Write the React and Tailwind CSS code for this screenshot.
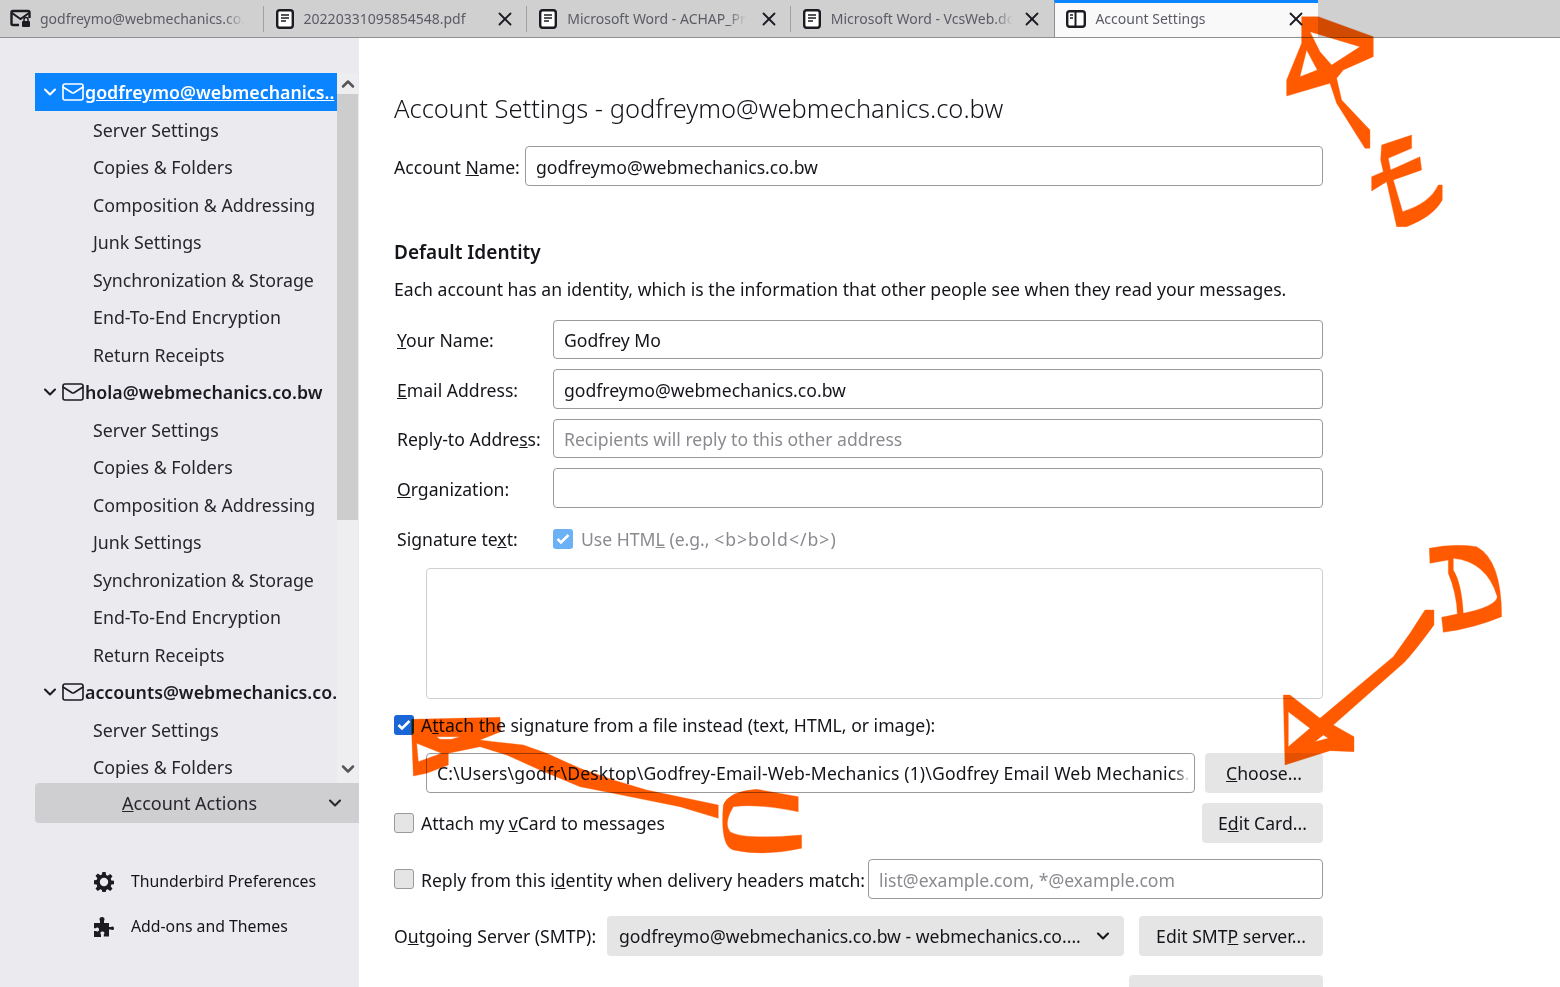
import { X, ChevronDown, ChevronUp, Mail } from "lucide-react";

const font = "font-['Noto_Sans','Open_Sans',sans-serif]";

const MailLock = () => (
  <svg width="22" height="20" viewBox="0 0 22 20" fill="none">
    <path d="M9 16H3a1.5 1.5 0 0 1-1.5-1.5v-11A1.5 1.5 0 0 1 3 2h15a1.5 1.5 0 0 1 1.5 1.5V9" stroke="#1c1b22" strokeWidth="2.4" />
    <path d="M2 4l8.5 6L19 4" stroke="#1c1b22" strokeWidth="2" />
    <rect x="12" y="12" width="8" height="6" rx="1" fill="#1c1b22" />
    <path d="M14 12v-1.5a2 2 0 0 1 4 0V12" stroke="#1c1b22" strokeWidth="1.5" />
  </svg>
);

const DocIcon = () => (
  <svg width="18" height="20" viewBox="0 0 18 20" fill="none">
    <rect x="1.2" y="1.2" width="15.6" height="17.6" rx="2.5" fill="#fff" stroke="#1c1b22" strokeWidth="2.4" />
    <path d="M5 6h8M5 9h8M5 12h5" stroke="#1c1b22" strokeWidth="1.6" />
  </svg>
);

const SplitIcon = () => (
  <svg width="20" height="18" viewBox="0 0 20 18" fill="none">
    <rect x="1.2" y="1.2" width="17.6" height="15.6" rx="2.5" fill="#fff" stroke="#1c1b22" strokeWidth="2.4" />
    <path d="M9.5 1.5v15" stroke="#1c1b22" strokeWidth="2" />
    <path d="M4 5h3M4 8h3" stroke="#1c1b22" strokeWidth="1.5" />
  </svg>
);

const Gear = () => (
  <svg width="20" height="20" viewBox="0 0 20 20">
    <path
      fillRule="evenodd"
      fill="#1c1b22"
      d="M8.4 0h3.2l.5 3 1.6.7 2.5-1.8 2.3 2.3-1.8 2.5.7 1.7 3 .5v3.2l-3 .5-.7 1.6 1.8 2.5-2.3 2.3-2.5-1.8-1.6.7-.5 3H8.4l-.5-3-1.6-.7-2.5 1.8-2.3-2.3 1.8-2.5-.7-1.6-3-.5V8.4l3-.5.7-1.7L1.5 3.700l2.3-2.3 2.5 1.800 1.600-.7zM10 5.800a4.200 4.200 0 1 0 0 8.400 4.200 4.200 0 0 0 0-8.400z"
    />
  </svg>
);

const PuzzleIcon = () => (
  <svg width="20" height="20" viewBox="0 0 20 20">
    <path
      fill="#1c1b22"
      d="M0 6h6V4.500C6 3.500 5.500 3 5.500 2 5.500.8 6.600 0 8 0s2.500.8 2.500 2c0 1-.5 1.500-.5 2.500V6h5v4h1.500c.8 0 1.200-.6 2-.6 1 0 1.500 1 1.500 1.800s-.5 1.800-1.500 1.800c-.8 0-1.200-.6-2-.6H15v7H9.800v-1.500c0-.8.6-1.200.6-2 0-1-1-1.500-2-1.500s-2 .5-2 1.500c0 .8.6 1.200.6 2V20H0v-6h1.500c.8 0 1.200.6 2 .6 1 0 1.500-1 1.500-2s-.5-2-1.500-2c-.8 0-1.200.6-2 .6H0z"
    />
  </svg>
);

const Tab = ({ icon, title, active, closable = true, separator = true, fade = true, iconPad = "pl-[12px]" }) => (
  <div
    className={`relative w-[263.6px] h-full flex items-center shrink-0 ${
      active ? "bg-[#f9f9fa] border-l border-[#8f8f8f] h-[38px] border-t-[3px] border-t-[#0a84ff] pb-[3px]" : ""
    }`}
  >
    <div className={`w-[40px] flex shrink-0 ${iconPad}`}>{icon}</div>
    <div
      className={`text-[14px] text-[#5b5b66] whitespace-nowrap ${
        fade ? "inline-block [mask-image:linear-gradient(to_right,black_90%,transparent)]" : ""
      }`}
    >
      {title}
    </div>
    {closable && <X className="absolute right-[11px] text-[#1c1b22]" size={22} strokeWidth={2} />}
    {separator && <div className="absolute right-0 top-[6px] h-[26px] w-px bg-[#a0a0a0]" />}
  </div>
);

const TabBar = () => (
  <div className="h-[38px] bg-[#d0d0d0] border-b border-[#8f8f8f] flex">
    <Tab icon={<MailLock />} title="godfreymo@webmechanics.co." closable={false} iconPad="pl-[10px]" />
    <Tab icon={<DocIcon />} title="20220331095854548.pdf" fade={false} />
    <Tab icon={<DocIcon />} title="Microsoft Word - ACHAP_Pr" />
    <Tab icon={<DocIcon />} title="Microsoft Word - VcsWeb.dc" separator={false} />
    <Tab icon={<SplitIcon />} title="Account Settings" active separator={false} fade={false} iconPad="pl-[11px]" />
  </div>
);

const children = [
  "Server Settings",
  "Copies & Folders",
  "Composition & Addressing",
  "Junk Settings",
  "Synchronization & Storage",
  "End-To-End Encryption",
  "Return Receipts",
];

const AccountRow = ({ name, selected }) => (
  <div
    className={`h-[37.5px] flex items-center pl-[5px] shrink-0 text-[17.8px] font-semibold whitespace-nowrap overflow-hidden ${
      selected ? "bg-[#0a84ff] text-white" : "text-[#1c1b22]"
    }`}
  >
    <ChevronDown size={20} strokeWidth={2.5} className="shrink-0" />
    <Mail size={24} strokeWidth={1.6} className="shrink-0 ml-px" />
    <span className={`pt-[2px] ${selected ? "underline" : ""}`}>{name}</span>
  </div>
);

const ChildRow = ({ label }) => (
  <div className="h-[37.5px] flex items-center pl-[58px] pt-[2px] shrink-0 text-[17.8px] text-[#26262c] whitespace-nowrap">
    {label}
  </div>
);

const Sidebar = () => (
  <div className="w-[359px] shrink-0 bg-[#ebebef] pt-[35px] flex flex-col">
    <div className="h-[710px] flex pl-[35px]">
      <div className="w-[302px] overflow-hidden flex flex-col">
        <AccountRow name="godfreymo@webmechanics.." selected />
        {children.map((c) => (
          <ChildRow key={c} label={c} />
        ))}
        <AccountRow name="hola@webmechanics.co.bw" />
        {children.map((c) => (
          <ChildRow key={c} label={c} />
        ))}
        <AccountRow name="accounts@webmechanics.co." />
        {children.slice(0, 2).map((c) => (
          <ChildRow key={c} label={c} />
        ))}
      </div>
      <div className="w-[21px] flex flex-col bg-[#eeeef0]">
        <div className="h-[21px] flex items-center justify-center">
          <ChevronUp size={20} strokeWidth={3} className="text-[#55555a]" />
        </div>
        <div className="h-[426px] bg-[#cdcdcd]" />
        <div className="flex-1 flex items-end justify-center pb-[4px]">
          <ChevronDown size={20} strokeWidth={3} className="text-[#55555a]" />
        </div>
      </div>
    </div>
    <div className="ml-[35px] h-[40px] bg-[#cfcfd1] rounded-l-[4px] flex items-center text-[18px] text-[#26262c] pl-[87px] pr-[14px] justify-between">
      <span>
        <u>A</u>ccount Actions
      </span>
      <ChevronDown size={20} strokeWidth={2.5} />
    </div>
    <div className="mt-[36px] pl-[94px] flex items-center h-[45px] gap-[17px] text-[15.8px] text-[#15141a]">
      <Gear />
      <span>Thunderbird Preferences</span>
    </div>
    <div className="pl-[94px] flex items-center h-[45px] gap-[17px] text-[15.8px] text-[#15141a]">
      <PuzzleIcon />
      <span>Add-ons and Themes</span>
    </div>
  </div>
);

const Box = ({ className = "", muted, children }) => (
  <div
    className={`border border-[#9a9a9a] rounded-[4px] bg-white flex items-center px-[10px] pt-[2px] whitespace-nowrap overflow-hidden ${
      muted ? "text-[#8a8a8f]" : ""
    } ${className}`}
  >
    {children}
  </div>
);

const Btn = ({ className = "", children }) => (
  <div className={`bg-[#e5e5e5] rounded-[4px] flex items-center justify-center h-[40px] ${className}`}>{children}</div>
);

const IdentityRow = ({ label, value, muted }) => (
  <div className="flex items-center h-[39.5px]">
    <div className="w-[159px] pl-[3px] whitespace-nowrap pt-[2px]">{label}</div>
    <Box muted={muted} className="flex-1 h-full">
      {value}
    </Box>
  </div>
);

const CheckMark = () => (
  <svg width="14" height="12" viewBox="0 0 14 12" fill="none">
    <path d="M1.500 6l3.500 3.500L12.500 2" stroke="#fff" strokeWidth="2.6" />
  </svg>
);

const Main = () => (
  <div className="flex-1 pl-[35px] pt-[52px] overflow-hidden">
    <div className="w-[929px] flex flex-col text-[17.6px] text-[#15141a]">
      <div className="h-[38px] flex items-center text-[25.5px] font-light whitespace-nowrap pb-[2px]">
        Account Settings - godfreymo@webmechanics.co.bw
      </div>

      <div className="mt-[18px] flex items-center h-[40px]">
        <div className="w-[131px] whitespace-nowrap pt-[2px]">
          Account <u>N</u>ame:
        </div>
        <Box className="flex-1 h-full">godfreymo@webmechanics.co.bw</Box>
      </div>

      <div className="mt-[50px] h-[32px] flex items-center text-[19px] font-semibold">Default Identity</div>
      <div className="mt-[4px] h-[34px] flex items-center whitespace-nowrap">
        Each account has an identity, which is the information that other people see when they read your messages.
      </div>

      <div className="mt-[13.7px] flex flex-col gap-[10px]">
        <IdentityRow label={<><u>Y</u>our Name:</>} value="Godfrey Mo" />
        <IdentityRow label={<><u>E</u>mail Address:</>} value="godfreymo@webmechanics.co.bw" />
        <IdentityRow label={<>Reply-to Addre<u>s</u>s:</>} value="Recipients will reply to this other address" muted />
        <IdentityRow label={<><u>O</u>rganization:</>} value="" />
      </div>

      <div className="mt-[12.300px] h-[38px] flex items-center">
        <div className="w-[159px] pl-[3px]">
          Signature te<u>x</u>t:
        </div>
        <div className="w-[20px] h-[20px] rounded-[3px] bg-[#6cb0f6] flex items-center justify-center">
          <CheckMark />
        </div>
        <div className="ml-[8px] text-[#8a8a8f]">
          Use HTM<u>L</u> (e.g., <span className="tracking-[1px]">&lt;b&gt;bold&lt;/b&gt;</span>)
        </div>
      </div>

      <div className="mt-[10px] ml-[32px] h-[131px] border border-[#cfcfcf] rounded-[4px]" />

      <div className="mt-[10px] h-[32px] flex items-center">
        <div className="w-[20px] h-[20px] rounded-[3px] bg-[#1a66d6] flex items-center justify-center">
          <CheckMark />
        </div>
        <div className="ml-[7px]">
          A<u>t</u>tach the signature from a file instead (text, HTML, or image):
        </div>
      </div>

      <div className="mt-[12px] ml-[32px] flex h-[40px]">
        <Box className="w-[769px] h-full !pt-0">
          <span className="tracking-[0.15px] [mask-image:linear-gradient(to_right,black_98%,transparent)]">
            C:\Users\godfr\Desktop\Godfrey-Email-Web-Mechanics (1)\Godfrey Email Web Mechanics.
          </span>
        </Box>
        <Btn className="ml-[10px] flex-1">
          <span>
            <u>C</u>hoose...
          </span>
        </Btn>
      </div>

      <div className="mt-[10px] flex items-center h-[40px]">
        <div className="w-[20px] h-[20px] rounded-[3px] bg-[#e5e5e5] border border-[#9a9a9a]" />
        <div className="ml-[7px]">
          Attach my <u>v</u>Card to messages
        </div>
        <Btn className="ml-auto w-[121px]">
          <span>
            E<u>d</u>it Card...
          </span>
        </Btn>
      </div>

      <div className="mt-[16px] flex items-center h-[40px]">
        <div className="w-[20px] h-[20px] rounded-[3px] bg-[#e5e5e5] border border-[#9a9a9a] shrink-0" />
        <div className="ml-[7px] w-[447px] whitespace-nowrap shrink-0 pt-[2px]">
          Reply from this i<u>d</u>entity when delivery headers match:
        </div>
        <Box muted className="flex-1 h-full">
          list@example.com, *@example.com
        </Box>
      </div>

      <div className="mt-[17px] flex items-center h-[40px]">
        <div className="w-[213px] whitespace-nowrap">
          O<u>u</u>tgoing Server (SMTP):
        </div>
        <Btn className="w-[517px] !justify-between pl-[12px] pr-[11px]">
          <span className="whitespace-nowrap">godfreymo@webmechanics.co.bw - webmechanics.co....</span>
          <ChevronDown size={20} strokeWidth={2.5} className="shrink-0" />
        </Btn>
        <Btn className="ml-[15px] flex-1">
          <span className="whitespace-nowrap">
            Edit SMT<u>P</u> server...
          </span>
        </Btn>
      </div>

      <div className="mt-[19px] flex justify-end">
        <Btn className="w-[194px]" />
      </div>
    </div>
  </div>
);

// hand drawn marks on top of the screenshot, traced at 3x from the crop origin
const Scribbles = () => (
  <svg
    className="absolute left-0 top-0 w-[1560px] h-[987px] pointer-events-none mix-blend-multiply"
    viewBox="0 0 1560 987"
    fill="#ff5a00"
    stroke="#ff5a00"
    strokeWidth="1"
    strokeLinejoin="round"
    fillRule="evenodd"
  >
    <g transform="translate(1040 0) scale(0.3333)">
      <path d="M785 50L835 50L1000 110L1000 170L910 210L890 235L905 300L990 390L990 445L975 445L890 310L870 250L740 288L740 240L785 130ZM810 95L960 140L875 195L840 155ZM800 150L832 210L780 230Z" />
      <path d="M1025 435L1115 405L1115 445L1045 475L1052 510L1140 470L1145 510L1060 540L1088 635Q1170 610 1195 555L1207 555L1207 600Q1180 650 1100 680L1070 680L1040 545L995 573L995 530L1030 515L1022 480Z" />
    </g>
    <g transform="translate(1120 530) scale(0.3333)">
      <path d="M928 55Q1000 40 1070 50Q1145 90 1145 260Q1060 295 970 307L965 262L1012 252Q1010 190 985 130L985 90L930 100ZM1000 85Q1100 95 1132 200Q1130 228 1030 250Q1025 160 1000 120Z" />
      <path d="M915 240L942 240L942 285Q880 370 850 400L640 585L702 620L702 665L630 662L495 705L490 495L510 495L600 565L820 380L870 310ZM505 545L570 595L505 650ZM585 635L625 625L610 615Z" />
    </g>
    <g transform="translate(380 690) scale(0.3333)">
      <path d="M95 88L360 82L362 125L300 150L340 155L430 165L500 190L600 235L700 270L800 300L1015 345L1015 385L900 350L800 330L700 310L600 290L480 240L380 195L300 170L205 190L205 225L140 250L100 258L95 130ZM110 160L185 190L115 215ZM170 140L240 140L215 148L180 148Z" />
      <path d="M1030 345Q1045 305 1130 298L1255 320L1255 365Q1130 340 1060 350Q1030 400 1050 425Q1090 450 1265 435L1265 475Q1150 500 1060 480Q1020 470 1030 345Z" />
    </g>
  </svg>
);

export default function App() {
  return (
    <div className={`relative w-[1560px] h-[987px] overflow-hidden bg-white ${font}`}>
      <TabBar />
      <div className="flex h-[949px]">
        <Sidebar />
        <Main />
      </div>
      <Scribbles />
    </div>
  );
}
